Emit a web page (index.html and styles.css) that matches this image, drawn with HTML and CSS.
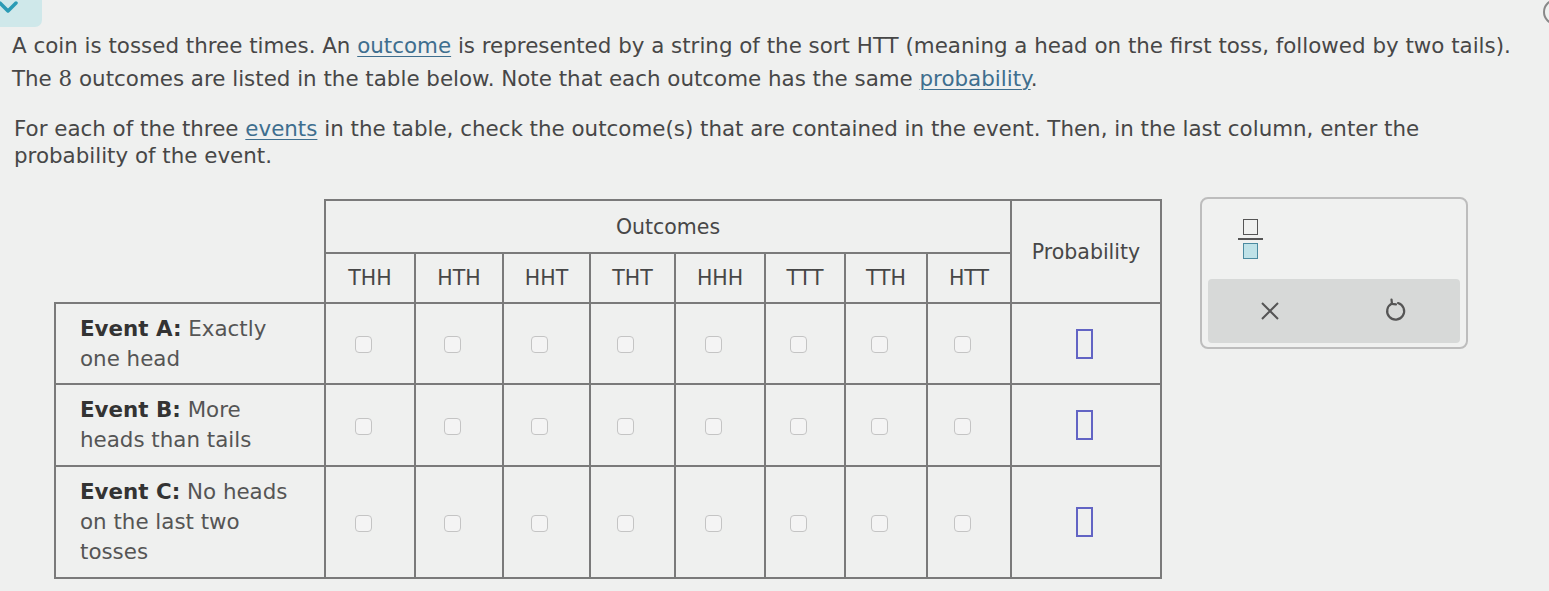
FILE: index.html
```html
<!DOCTYPE html>
<html>
<head>
<meta charset="utf-8">
<link rel="stylesheet" href="styles.css">
</head>
<body>
<div class="topbar">
  <div class="chev"><svg width="24" height="16" viewBox="0 0 24 16"><path d="M3 3 L11 11 L19 3" fill="none" stroke="#2a9bb5" stroke-width="3.5" stroke-linecap="round" stroke-linejoin="round"/></svg></div>
  <div class="ring"></div>
</div>
<div class="content">
  <p class="para">A coin is tossed three times. An <span class="lnk">outcome</span> is represented by a string of the sort HTT (meaning a head on the first toss, followed by two tails).<br>The <span class="num">8</span> outcomes are listed in the table below. Note that each outcome has the same <span class="lnk">probability</span>.</p>
  <p class="para2">For each of the three <span class="lnk">events</span> in the table, check the outcome(s) that are contained in the event. Then, in the last column, enter the<br>probability of the event.</p>
  <div class="work">
    <table class="grid">
      <tr class="h1">
        <td class="blank" rowspan="2"></td>
        <th colspan="8">Outcomes</th>
        <th rowspan="2" class="prob">Probability</th>
      </tr>
      <tr class="h2">
        <th class="c1">THH</th><th class="c2">HTH</th><th class="c3">HHT</th><th class="c4">THT</th><th class="c5">HHH</th><th class="c6">TTT</th><th class="c7">TTH</th><th class="c8">HTT</th>
      </tr>
      <tr class="ra">
        <td class="ev"><b>Event A:</b> Exactly<br>one head</td>
        <td><span class="cb"></span></td><td><span class="cb"></span></td><td><span class="cb"></span></td><td><span class="cb"></span></td><td><span class="cb"></span></td><td><span class="cb"></span></td><td><span class="cb"></span></td><td><span class="cb"></span></td>
        <td><span class="inp"></span></td>
      </tr>
      <tr class="rb">
        <td class="ev"><b>Event B:</b> More<br>heads than tails</td>
        <td><span class="cb"></span></td><td><span class="cb"></span></td><td><span class="cb"></span></td><td><span class="cb"></span></td><td><span class="cb"></span></td><td><span class="cb"></span></td><td><span class="cb"></span></td><td><span class="cb"></span></td>
        <td><span class="inp"></span></td>
      </tr>
      <tr class="rc">
        <td class="ev"><b>Event C:</b> No heads<br>on the last two<br>tosses</td>
        <td><span class="cb"></span></td><td><span class="cb"></span></td><td><span class="cb"></span></td><td><span class="cb"></span></td><td><span class="cb"></span></td><td><span class="cb"></span></td><td><span class="cb"></span></td><td><span class="cb"></span></td>
        <td><span class="inp"></span></td>
      </tr>
    </table>
    <div class="panel">
      <div class="frac"><span class="fbox"></span><span class="fbar"></span><span class="fbox fill"></span></div>
      <div class="tools">
        <svg width="22" height="22" viewBox="0 0 22 22"><path d="M3 3 L19 19 M19 3 L3 19" stroke="#555" stroke-width="2" fill="none"/></svg>
        <svg width="26" height="26" viewBox="0 0 26 26"><path d="M8 5.5 A8.5 8.5 0 1 0 14 5" stroke="#555" stroke-width="2.2" fill="none" stroke-linecap="round"/><path d="M7.5 1.5 L8 5.8 L12 6.3" stroke="#555" stroke-width="2.2" fill="none" stroke-linecap="round" stroke-linejoin="round"/></svg>
      </div>
    </div>
  </div>
</div>
</body>
</html>
```

FILE: styles.css
```css
html, body {
  margin: 0;
  padding: 0;
  background: #eff0ef;
  font-family: "DejaVu Sans", Verdana, sans-serif;
  color: #474747;
  width: 1549px;
  height: 591px;
  overflow: hidden;
}
.topbar {
  display: flex;
  justify-content: space-between;
  height: 22px;
}
.chev {
  width: 42px;
  height: 27px;
  background: #cfe8ea;
  border-bottom-right-radius: 7px;
  overflow: hidden;
  flex: none;
}
.chev svg { display: block; margin-left: -3px; margin-top: 0; }
.ring {
  width: 22px;
  height: 22px;
  border: 2px solid #888;
  border-radius: 50%;
  margin-right: -20px;
  margin-top: -1px;
}
.content {
  padding: 0 0 0 12px;
}
.para {
  margin: 7px 0 0 0;
  font-size: 21.4px;
  line-height: 33px;
}
.para2 {
  margin: 20px 0 0 2px;
  font-size: 21.4px;
  line-height: 27px;
}
.lnk {
  color: #3e6e8e;
  text-decoration: underline;
  text-underline-offset: 3px;
  text-decoration-thickness: 1px;
}
.num { font-family: "DejaVu Serif", serif; }
.work {
  display: flex;
  align-items: flex-start;
  margin-top: 30px;
}
.grid {
  border-collapse: collapse;
  margin-left: 42px;
  font-size: 20.5px;
}
.grid td, .grid th {
  border: 2px solid #7a7a7a;
  text-align: center;
  font-weight: normal;
  padding: 0;
}
.grid .blank {
  border-top: none;
  border-left: none;
  width: 269px;
}
.h1 { height: 53px; }
.h2 { height: 50px; }
.prob { width: 148px; }
.c1 { width: 88px; } .c2 { width: 86px; } .c3 { width: 85px; } .c4 { width: 83px; }
.c5 { width: 88px; } .c6 { width: 78px; } .c7 { width: 80px; } .c8 { width: 82px; }
.ra { height: 81px; }
.rb { height: 82px; }
.rc { height: 112px; }
.grid td.ev {
  text-align: left;
  padding-left: 24px;
  font-size: 21.4px;
  line-height: 30px;
  color: #555;
}
.ev b { color: #333; }
.cb {
  display: inline-block;
  width: 15px;
  height: 15px;
  border: 1.5px solid #c4c4c4;
  border-radius: 4px;
  background: #f4f4f4;
  vertical-align: middle;
  margin-left: -14px;
}
.inp {
  display: inline-block;
  width: 13px;
  height: 26px;
  border: 2px solid #6264c4;
  vertical-align: middle;
  margin-left: -4px;
}
.panel {
  margin-left: 38px;
  margin-top: -2px;
  width: 268px;
  height: 152px;
  border: 2px solid #bdbdbd;
  border-radius: 8px;
  box-sizing: border-box;
  padding: 0 6px;
  display: flex;
  flex-direction: column;
  background: #f0f1f0;
}
.frac {
  display: flex;
  flex-direction: column;
  align-items: center;
  width: 28px;
  margin: 20px 0 0 28px;
  gap: 3px;
}
.fbox {
  width: 13px;
  height: 14px;
  border: 1.5px solid #555;
  display: block;
}
.fbox.fill { background: #bfe2e8; border-color: #4b8aa0; }
.fbar {
  width: 25px;
  height: 2px;
  background: #555;
  display: block;
}
.tools {
  margin-top: 20px;
  height: 64px;
  background: #d7d9d8;
  border-radius: 4px;
  display: flex;
  align-items: center;
  justify-content: space-between;
  padding: 0 50px 0 51px;
}
```
